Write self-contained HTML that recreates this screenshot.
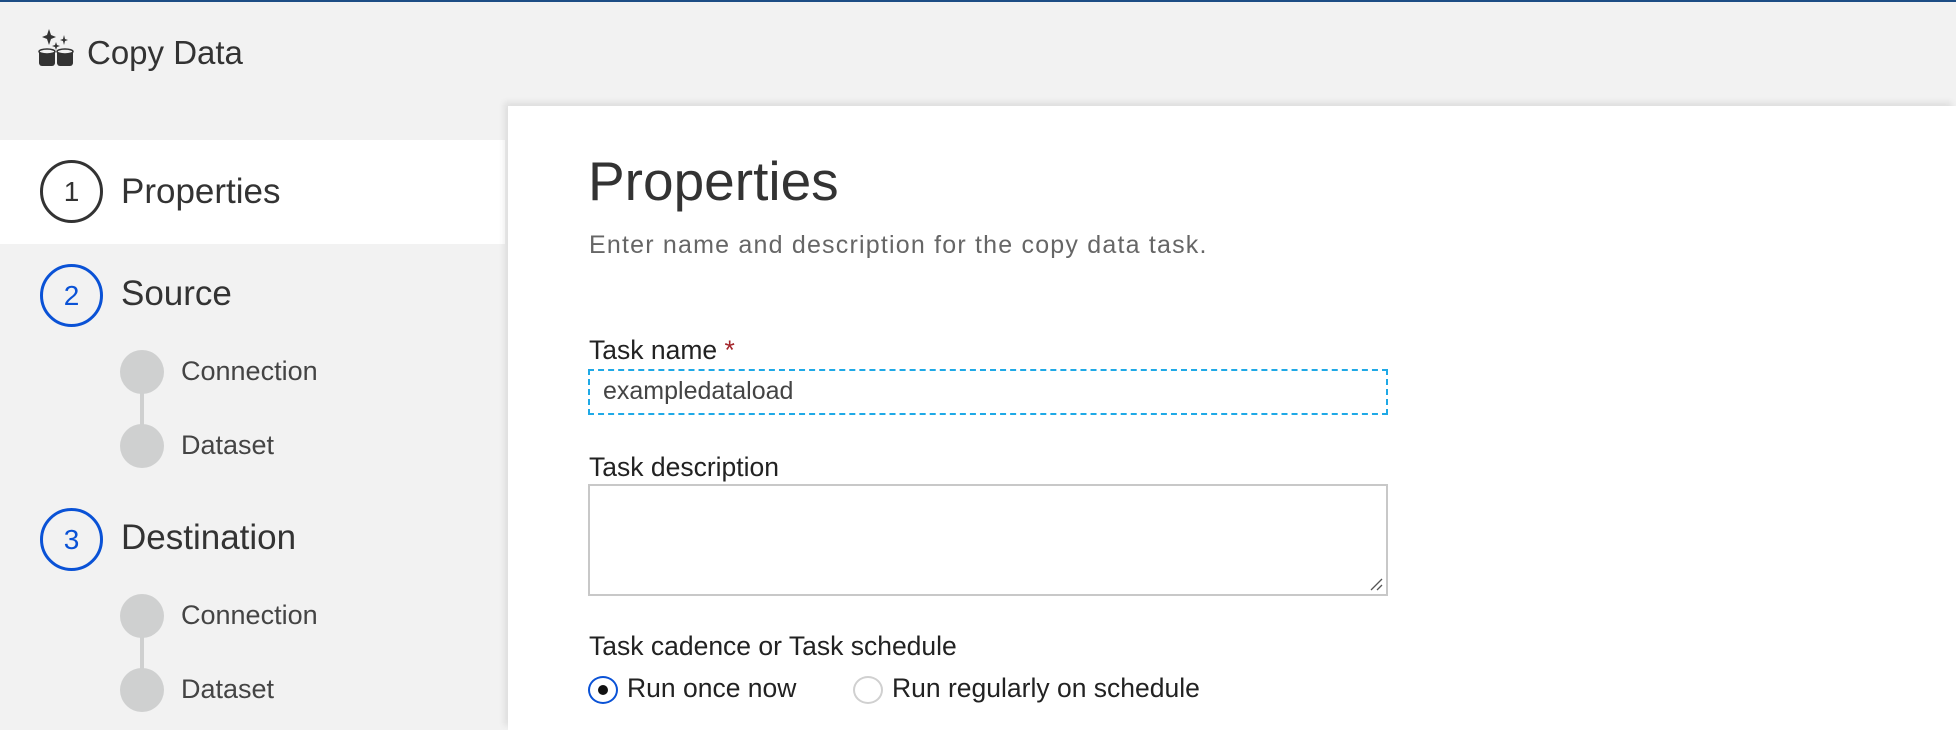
<!DOCTYPE html>
<html><head><meta charset="utf-8"><style>
*{margin:0;padding:0;box-sizing:border-box}
body{width:1956px;height:730px;background:#f2f2f2;font-family:"Liberation Sans",sans-serif;position:relative;overflow:hidden;color:#333}
.abs{position:absolute;white-space:nowrap}
.topline{left:0;top:0;width:1956px;height:2px;background:#1d4d85}
.circ{position:absolute;width:63px;height:63px;border-radius:50%;border:3px solid #333;font-size:28px;display:flex;align-items:center;justify-content:center}
.blue{border-color:#0a52d6;color:#0a52d6}
.step{font-size:35px;color:#333;line-height:1}
.dot{position:absolute;width:44px;height:44px;border-radius:50%;background:#cfd0d0}
.vl{position:absolute;width:4px;background:#cfd0d0;left:140px}
.sub{font-size:27px;color:#444;line-height:1}
.card{left:508px;top:106px;width:1448px;height:624px;background:#fff;box-shadow:-4px -4px 6px rgba(0,0,0,0.08)}
.lbl{font-size:26.5px;color:#222;line-height:1}
</style></head><body>
<div class="abs topline"></div>
<svg class="abs" style="left:36px;top:28px" width="40" height="42" viewBox="36 28 40 42">
<path d="M49 29 L51 35 L56 37 L51 39 L49 45 L47 39 L42 37 L47 35 Z" fill="#333"/>
<path d="M56 42 L57 45 L60 46 L57 47 L56 50 L55 47 L52 46 L55 45 Z" fill="#333"/>
<path d="M64 35 L65 39 L68 40 L65 41 L64 45 L63 41 L60 40 L63 39 Z" fill="#333"/>
<rect x="39" y="50" width="16" height="16" rx="3" fill="#333"/>
<ellipse cx="47" cy="51.5" rx="8" ry="2.5" fill="#f2f2f2" stroke="#333" stroke-width="1.5"/>
<rect x="57" y="50" width="16" height="16" rx="3" fill="#333"/>
<ellipse cx="65" cy="51.5" rx="8" ry="2.5" fill="#f2f2f2" stroke="#333" stroke-width="1.5"/>
</svg>
<div class="abs" style="left:87px;top:34px;font-size:33px;color:#333">Copy Data</div>

<div class="abs" style="left:0;top:140px;width:505px;height:104px;background:#fff"></div>
<div class="circ" style="left:40px;top:160px">1</div>
<div class="abs step" style="left:121px;top:174px">Properties</div>
<div class="circ blue" style="left:40px;top:264px">2</div>
<div class="abs step" style="left:121px;top:276px">Source</div>
<div class="vl" style="top:372px;height:74px"></div>
<div class="dot" style="left:120px;top:350px"></div>
<div class="dot" style="left:120px;top:424px"></div>
<div class="abs sub" style="left:181px;top:358px">Connection</div>
<div class="abs sub" style="left:181px;top:432px">Dataset</div>
<div class="circ blue" style="left:40px;top:508px">3</div>
<div class="abs step" style="left:121px;top:520px">Destination</div>
<div class="vl" style="top:616px;height:74px"></div>
<div class="dot" style="left:120px;top:594px"></div>
<div class="dot" style="left:120px;top:668px"></div>
<div class="abs sub" style="left:181px;top:602px">Connection</div>
<div class="abs sub" style="left:181px;top:676px">Dataset</div>

<div class="abs card"></div>
<div class="abs" style="left:588px;top:154px;font-size:55px;color:#333;line-height:1">Properties</div>
<div class="abs" style="left:589px;top:233px;font-size:25px;letter-spacing:1.2px;color:#666;line-height:1">Enter name and description for the copy data task.</div>
<div class="abs lbl" style="left:589px;top:337px">Task name <span style="color:#a4262c">*</span></div>
<div class="abs" style="left:588px;top:369px;width:800px;height:46px;border:2px dashed #1fa9e6"></div>
<div class="abs" style="left:603px;top:379px;font-size:25px;color:#444;line-height:1">exampledataload</div>
<div class="abs lbl" style="left:589px;top:454px">Task description</div>
<div class="abs" style="left:588px;top:484px;width:800px;height:112px;border:2px solid #c8c8c8"></div>
<svg class="abs" style="left:1368px;top:576px" width="16" height="16"><path d="M3 14 L14 3 M9 14 L14 9" stroke="#555" stroke-width="1.3"/></svg>
<div class="abs lbl" style="left:589px;top:633px">Task cadence or Task schedule</div>
<div class="abs" style="left:588px;top:676px;width:30px;height:28px;border-radius:50%;border:2px solid #0a52d6"></div>
<div class="abs" style="left:598px;top:685px;width:10px;height:10px;border-radius:50%;background:#111"></div>
<div class="abs lbl" style="left:627px;top:675px">Run once now</div>
<div class="abs" style="left:853px;top:676px;width:30px;height:28px;border-radius:50%;border:2px solid #d0d0d0"></div>
<div class="abs lbl" style="left:892px;top:675px">Run regularly on schedule</div>
</body></html>
